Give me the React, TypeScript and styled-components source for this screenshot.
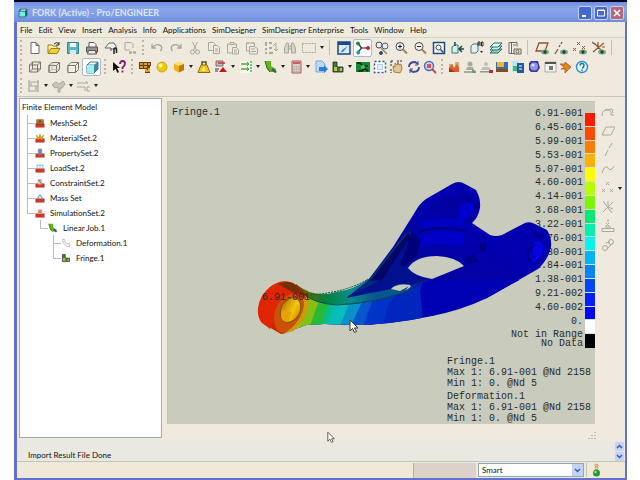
import React from 'react';
import styled, { createGlobalStyle, css } from 'styled-components';

const GlobalStyle = createGlobalStyle`
  * { box-sizing: border-box; }
  html, body { margin: 0; background: #fff; }
  body, button, select { font-family: Lato, "Liberation Sans", sans-serif; font-size: 8px; color: #111; }
`;

/* ---------- icons, all drawn on a 14 x 14 grid ---------- */
const g = '#aaa79d';
const d = '#6a6963';
const lens = (c: string, inner?: React.ReactNode) => (
  <g fill="none" stroke={c}>
    <circle cx="6" cy="5.5" r="4" fill="#eef4f4" />
    <path d="M9 8.500l4 4" stroke="#a08a48" strokeWidth="2" />
    {inner}
  </g>
);
const cube = (fill: string, stroke: string, front = fill) => (
  <g stroke={stroke} fill={fill}>
    <path d="M2 5.500L5 2.500H12.500V9.500L9.500 12.500H2z" />
    <path d="M2 5.500H9.500V12.500H2z" fill={front} />
    <path d="M9.500 5.500l3-3" />
  </g>
);
const base = <path d="M1 8h12v5H1z" fill="#d3392a" stroke="#a3281c" strokeWidth=".6" />;
const eye = (
  <g>
    <ellipse cx="10" cy="11" rx="4" ry="2.500" fill="#7fa98c" />
    <circle cx="10" cy="11" r="1.700" fill="#164a34" />
  </g>
);

const icons: Record<string, React.ReactNode> = {
  app: <g><path d="M1 4l3-3h9v9l-3 3H1z" fill="#155e63" /><path d="M2 5h8v7H2z" fill="#6ff0d8" /><path d="M3 4l2-2h7l-2 2z" fill="#c6fff2" /></g>,
  newFile: <path d="M3 1.500h5l3 3v8H3zM8 1.500v3h3" fill="#fff" stroke={d} />,
  open: <g><path d="M1 12V4h4l1 1h4v3" fill="#fff2a0" stroke="#9c7f1a" /><path d="M1 12.500l3-5h9l-3 5z" fill="#f5cf3c" stroke="#9c7f1a" /><path d="M7 3q3-3 5 0m0-2v3H9" fill="none" stroke="#333" /></g>,
  save: <g><path d="M1.500 1.500h11v11h-11z" fill="#58b6c4" stroke="#33828f" /><path d="M4 2h6v4H4z" fill="#f4fbfb" /><path d="M4 9h6v4H4z" fill="#d8ecf0" /></g>,
  print: <g stroke="#555" fill="#ddd"><path d="M4 6V1.500h5l2 2V6" fill="#fff" /><path d="M1.500 6h11v5h-11z" fill="#96938c" /><path d="M3.500 9.500h7l1 3.500h-9z" fill="#eee" /><circle cx="11" cy="11" r="1" fill="#c22" stroke="none" /></g>,
  mail: <g fill="none" stroke={d}><path d="M1 7l4-5h5l2 3v3H6" fill="#eee" /><path d="M1 7h6v3" /><path d="M10 13V8q1.500-2 2.500 0v4" stroke="#222" strokeWidth="1.500" /></g>,
  link: <g fill="none" stroke={g}><path d="M2 9V1.500h6l2 2V7M2 9h5" /><path d="M6 11.500h3m1 0h3" strokeWidth="2.500" /></g>,
  undo: <path d="M2 3v4h4M2.500 6.500q3-4 7-2.500t1 6" fill="none" stroke={g} strokeWidth="1.400" />,
  redo: <path d="M12 3v4H8M11.500 6.500q-3-4-7-2.500t-1 6" fill="none" stroke={g} strokeWidth="1.400" />,
  cut: <g fill="none" stroke={g}><path d="M4.500 1l4 8M9.500 1l-4 8" /><circle cx="4.500" cy="11" r="2" /><circle cx="9.500" cy="11" r="2" /></g>,
  copy: <g fill="#efeae0" stroke={g}><path d="M1.500 1.500h5l2 2v6h-7z" /><path d="M6.500 4.500h4l2 2v6h-6zM8 8h3M8 10h3" /></g>,
  paste: <g fill="#efeae0" stroke={g}><path d="M1.500 3h9v9h-9z" /><path d="M4 1.500h4v2H4z" /><path d="M6.500 6.500h4l2 2v4.500h-6zM8 9h3M8 11h3" /></g>,
  special: <g fill="#efeae0" stroke={g}><path d="M1.500 2h8v8h-8z" /><path d="M4.500 5.500h5l3 2V13h-8zM6 8h4M6 10.500h5M3 1v2M8 1v2" /></g>,
  regen: <g fill="none" stroke={g}><path d="M2 1v4M2 7v2M2 11v2M5 2h3M5 7h3M5 12h4" strokeWidth="2" /><path d="M9 5l3-3v8m-2-2l2 2 2-2" /></g>,
  find: <g fill="#d7d2c7" stroke={g}><path d="M1.500 12V7l2-5h2v10zM12.500 12V7l-2-5h-2v10zM5.500 5h3v3h-3z" /></g>,
  marquee: <path d="M.5 2.500h13v9H.5z" fill="none" stroke={g} strokeDasharray="2 1" />,
  repaint: <g><path d="M1 1h12v12H1z" fill="#d7ebf6" stroke="#1c4886" strokeWidth="1.500" /><path d="M1 1h12v3H1z" fill="#1c4886" /><path d="M11 5l-5 6H4l1-2z" fill="#477eb4" /></g>,
  spin: <g fill="none" strokeWidth="1.400"><path d="M5.500 7H12" stroke="#555" /><path d="M2 2l3.500 5-3.500 4.500" stroke="#345" /><circle cx="12" cy="7" r="1.500" fill="#c22" stroke="#c22" strokeWidth="1" /><circle cx="2" cy="2.500" r="1.500" fill="#282" stroke="#282" strokeWidth="1" /><circle cx="2.200" cy="11.500" r="1.500" fill="#299" stroke="#299" strokeWidth="1" /></g>,
  orient: <g fill="none" stroke="#464a58"><circle cx="4" cy="4" r="3" /><circle cx="10" cy="5" r="3" stroke="#3963a3" /><path d="M6 7l6 6" stroke="#a08a48" strokeWidth="1.500" /><circle cx="6" cy="12" r="1.500" fill="#2446a0" /></g>,
  zoomIn: lens('#454b50', <path d="M4 5.500h4M6 3.500v4" stroke="#222" />),
  zoomOut: lens('#454b50', <path d="M4 5.500h4" stroke="#222" />),
  refit: <g><path d="M1.500 1.500h11v11h-11z" fill="#f5f9fb" stroke="#27487b" strokeWidth="1.500" /><circle cx="6.500" cy="6.500" r="2.500" fill="none" stroke="#345" /><path d="M8.500 8.500l3 3" stroke="#345" strokeWidth="1.500" /></g>,
  reorient: <g><path d="M1 6l3-2h3v8H1z" fill="#d3f1ee" stroke="#357a73" /><path d="M4 1v4M13 8H8m3-3L8 8l3 3" stroke="#174e49" fill="none" strokeWidth="1.500" /></g>,
  saved: <g><path d="M1 5l2-2h5v7l-2 2H1z" fill="#dff3f0" stroke="#5b7672" /><path d="M8 5V1h2v4M8 3h2M11.500 1v4h1.500V1z" stroke="#333" fill="none" /><path d="M10 10h3l-1.500 2z" fill="#222" /></g>,
  layers: <g stroke="#276c67"><path d="M1 12l4-4h8l-4 4z" fill="#8fd0c9" /><path d="M1 9l4-4h8l-4 4z" fill="#c9ece8" /><path d="M1 6l4-4h8L9 6z" fill="#e8faf8" /></g>,
  viewMgr: <g fill="none" stroke={d}><path d="M1 1.500h8v4M1 1.500v11h5M3.500 2v10M5 4h3" fill="#f6f6f1" /><path d="M6 8h7v5H6z" fill="#e3e0d4" /><circle cx="9.500" cy="10.500" r="1.500" /></g>,
  plane: <g><path d="M1 10l3-8h9L10 10z" fill="none" stroke="#8e5630" strokeWidth="1.300" />{eye}</g>,
  axis: <g><path d="M1 13L4 8M5 6l1-2M7 3l1-2" stroke="#8e5630" strokeWidth="1.300" />{eye}</g>,
  points: <g><path d="M4 1l3 3m0-3L4 4M0 7l3 3m0-3l-3 3M9 5l3 3m0-3L9 8" stroke="#8e5630" />{eye}</g>,
  csys: <g><path d="M2 2l9 9M12 2L1 11M6 6V1M0 1l2 2M10 6h3" stroke="#8e5630" strokeWidth="1.200" />{eye}</g>,
  wire: <g fill="none" stroke={d} strokeWidth=".9"><path d="M1.500 5l3-3h8v7l-3 3h-8zM1.500 5h8v7M9.500 5l3-3M4.500 2v7h8M4.500 9l-3 3" /></g>,
  hidden: <g><g>{cube('none', '#77756f')}</g><path d="M5 2.500v7h7M5 9.500l-3 3" stroke="#b9b6ad" fill="none" /></g>,
  noHidden: cube('#f3f0e8', '#77756f'),
  shaded: <g><path d="M2 5l3-3h8v7l-4 4H2z" fill="#3a8c99" stroke="#4d7177" /><path d="M2 5h7v8H2z" fill="#9ef0ef" /><path d="M3 4.500L5.500 2.500H12l-2.500 2z" fill="#fff" /></g>,
  context: <g><path d="M1 2v9l2.500-2 2 4 1.500-1-2-4H8z" fill="#111" /><path d="M8 4q0-3 2.500-3T13 3.500t-2.500 4V9m0 1.500v2" stroke="#7a2070" strokeWidth="1.800" fill="none" /></g>,
  mesh: <g><path d="M1 2h12v4h-1v7H7V9H1z" fill="#6d3a12" /><path d="M2 4h3m1 0h3m1 0h2M2 7h3m1 0h3M8 9v2h3V8" stroke="#f2c22c" strokeWidth="1.600" fill="none" /></g>,
  ball: <g><circle cx="7" cy="7" r="5" fill="#f0ca05" stroke="#a98a00" strokeWidth=".6" /><circle cx="5.500" cy="5.500" r="2" fill="#fff9a4" /></g>,
  goldCube: <g><path d="M2 4l5-2 5 2v6l-5 2.500L2 10z" fill="#eeb014" /><path d="M2 4l5 2 5-2-5-2z" fill="#ffe269" /><path d="M7 6v6.500L12 10V4z" fill="#b97809" /></g>,
  weight: <g><path d="M4 5L1 12.500h12L10 5z" fill="#f4c70e" stroke="#8a6f12" /><path d="M5 5V2h4v3" fill="none" stroke="#665417" strokeWidth="1.500" /><path d="M7 6l-2 5h3z" fill="#fff8b8" /></g>,
  constraint: <g><path d="M1 1h12v12H1z" fill="#f6ece8" /><path d="M2 1h7v5H2z" fill="#d9b8b4" stroke="#555" strokeWidth=".8" /><path d="M1 9h4M1 11h3" stroke="#333" /><path d="M9 7l4 5H5z" fill="#c51a1a" /><path d="M4 3h7" stroke="#c33" strokeWidth="1.500" /></g>,
  flow: <g><path d="M1 1h12v12H1z" fill="#f4fae8" /><path d="M2 4h8M2 9h8" stroke="#58a22c" strokeWidth="1.400" /><path d="M8 2l2 2-2 2M8 7l2 2-2 2" fill="none" stroke="#58a22c" /><path d="M12 1v12" stroke="#28a5a0" strokeWidth="1.400" strokeDasharray="2 1" /></g>,
  job: <g><path d="M1 1h6v5l5 3v3H6L3 9z" fill="#63b51d" /><path d="M1 1l2 7 3 4" stroke="#376e0c" fill="none" /><path d="M9 8l4 4-2 1-4-3z" fill="#365d78" /></g>,
  calc: <g><path d="M3 1h9v12H3z" fill="#d6d0c7" stroke="#b3565b" /><path d="M4 3h7" stroke="#c33" strokeWidth="1.500" /><path d="M5 6v6M7.500 6v6M10 6v6" stroke="#aaa" strokeDasharray="1.500 1" strokeWidth="1.500" /></g>,
  exportIcon: <g><path d="M2 1h6l3 3v8H2z" fill="#b8dcf5" stroke="#7aa8d4" /><path d="M5 7h5V5l4 4-4 4v-2H5z" fill="#2e7bd0" /></g>,
  fringe: <g><path d="M2 2h4v5h6v5H2z" fill="#437a32" stroke="#222" strokeWidth=".8" /><path d="M3 7h3v4H3z" fill="#a3c84a" /><path d="M9 8h2v3H9z" fill="#bfae91" /></g>,
  chip: <g><path d="M0 2h14v10H0z" fill="#17843a" /><path d="M1 3h3l3 3h5M2 11h4l2-3 4 3" stroke="#04240c" strokeWidth="1.600" fill="none" /><circle cx="7" cy="7" r="2" fill="#37cf5e" /></g>,
  fence: <g><path d="M1.500 1.500h11v11h-11z" fill="#fff" stroke="#1f529e" strokeWidth="1.400" strokeDasharray="2 2" /><path d="M4.500 4.500h5v5h-5z" fill="#e6f0fa" stroke="#b4cdea" /></g>,
  hand: <g><path d="M1 1v6M1 9v4M1 1h3M7 1h5" stroke="#333" strokeDasharray="2 1" /><path d="M4 12L3 6l2 1V3l2 2 1-3 1 3 2-1 1 5-2 4z" fill="#e3c793" stroke="#8c6b35" strokeWidth=".8" /></g>,
  rotate: <g fill="none" stroke="#424b8e" strokeWidth="1.800"><path d="M2 7q0-5 6-5l3 2M12 7q0 5-6 5l-3-2" /><path d="M11 1v4H8M3 13V9h3" strokeWidth="1" /></g>,
  zoomBox: <g><circle cx="6" cy="6" r="4.500" fill="#cbd8f7" stroke="#5966bd" strokeWidth="1.500" /><path d="M4 4h4v4H4z" fill="#d35454" /><path d="M9 9l4 4" stroke="#ab5353" strokeWidth="2" /></g>,
  blocks: <g><path d="M2 4h4v3H2zM8 2h4v4H8z" fill="#d8ae78" /><path d="M2 8h10v4H2z" fill="#8e3c20" /><path d="M2 8l3-4 2 4 3-4 2 3v5H8z" fill="#e35b2a" /></g>,
  person: <g fill="#aaa9a5"><circle cx="7" cy="4" r="2.500" /><path d="M4 7h6l1 3H3zM1 11h12v2H1z" /><path d="M9 9l4 2v2H9z" fill="#6ba26c" /></g>,
  personRed: <g fill="#c0beb8"><circle cx="7" cy="4" r="2" /><path d="M4 7h6l2 3H2z" /><path d="M1 11h12v1.500H1z" fill="#999" /><path d="M10 10h4v3h-4z" fill="#bb2f3c" /></g>,
  photo: <g><path d="M1 2h12v10H1z" fill="#3c67b1" /><path d="M2 2h7v5H2z" fill="#f0b52a" /><path d="M1 9h12v3H1z" fill="#81501b" /></g>,
  tile: <g><path d="M1 1h7v11H1z" fill="#bde3f8" /><path d="M6 3h7v10H6z" fill="#1f5a9b" /><path d="M2 6h4v5H2z" fill="#4eb55c" /><path d="M8 6h3M8 9h3" stroke="#fff" /></g>,
  globe: <g><path d="M2 3l2-2h7l2 7-3 4H4l-2-2z" fill="#3a3a96" /><circle cx="7" cy="6.500" r="4" fill="#8d93e6" /><circle cx="6" cy="5" r="1.500" fill="#e4e7ff" /></g>,
  sheet: <g><path d="M2 2h11v10H2z" fill="#f3f3ef" stroke="#aaa" /><path d="M2 2h11v2H2z" fill="#555" /><path d="M6 6h4v4H6z" fill="#777" /></g>,
  arrowRight: <path d="M1 4h5V2l6 5-6 6V9H2q4-1 3-2z" fill="#e68418" stroke="#a84b12" strokeWidth=".7" />,
  help: <g><circle cx="7" cy="7" r="5.500" fill="#e4f4fc" stroke="#2c8fc4" strokeWidth="1.400" /><path d="M5 5.500Q5 3.500 7 3.500t2 2-2 2.500m0 1.500v1.500" stroke="#1876ac" strokeWidth="1.400" fill="none" /></g>,
  film: <g fill="none" stroke={g}><path d="M2 1v12M11 1v12M2 3h9M2 7h9M2 12h9M4 7V4M9 7v4" strokeWidth="1.200" /></g>,
  bolt: <g fill="#c9c5bc" stroke={g}><path d="M0 6l4-3 3 2 4-3 2 3-3 4H8v4H6V8L3 9z" /></g>,
  wireRow: <g fill="none" stroke={g}><path d="M0 4h11l-2-2M3 8h5v4M13 8h-3v4h3M0 8h3" /></g>,
  meshSet: <g>{base}<path d="M2 2h10v7H2z" fill="#6e3813" /><path d="M3 4h3m2 0h3M3 7h8" stroke="#d5a033" strokeWidth="1.500" /></g>,
  materialSet: <g>{base}<path d="M2 3l3 5 2-5 2 5 3-5" fill="none" stroke="#c7a319" strokeWidth="2" /></g>,
  propertySet: <g>{base}<path d="M4 1h6v8H4z" fill="#8da3ca" /><path d="M6 1v8M8 1v8" stroke="#5d6f9b" /></g>,
  loadSet: <g>{base}<path d="M2 3h10M3 3v4M7 3v4M11 3v4" stroke="#82c8cb" strokeWidth="1.400" /></g>,
  constraintSet: <g>{base}<path d="M4 2h6v7H4z" fill="#d4c6c0" /><path d="M4 3h4M6 4l3 4" stroke="#784b4b" /></g>,
  massSet: <g>{base}<path d="M7 1l5 7H2z" fill="#7aa9d6" /><circle cx="7" cy="6" r="1.500" fill="#e9f4ff" /></g>,
  simSet: <g>{base}<path d="M4 2h6v6H4z" fill="#e9a796" /><path d="M5 4h4M5 6h4" stroke="#b7604e" /></g>,
  deform: <path d="M2 2h3q0 5 3 6h4v4Q3 12 2 2z" fill="#fafafa" stroke="#aaa" />,
  curve1: <g fill="none" stroke={g}><path d="M1 11q0-6 5-6t4 5h3M4 5l7-1M11 4l1 4" /></g>,
  sidePlane: <path d="M1 11l4-8h9l-4 8z" fill="none" stroke={g} />,
  sideAxis: <path d="M4 13L7 7M8 5l3-5" fill="none" stroke={g} />,
  sideCurve: <path d="M1 11q3-9 6-5t6-2" fill="none" stroke={g} />,
  sidePoints: <path d="M5 1l3 3m0-3L5 4M1 8l3 3m0-3l-3 3M9 8l3 3m0-3l-3 3" stroke={g} />,
  sideCsys: <path d="M2 1l9 12M12 2L2 12M7 6V1M7 7l5 2" fill="none" stroke={g} />,
  sideStamp: <g fill="none" stroke={g}><path d="M5 4l3 3m0-3L5 7M7 0v3M1 9.500h12v3H1zM4 8h6" /></g>,
  sideChain: <g fill="none" stroke={g}><circle cx="4" cy="10" r="2.500" /><circle cx="10" cy="4" r="2.500" /><path d="M5 5l4-1M6 11l5-5" /></g>,
};

const Svg = styled.svg`
  display: block;
  flex: none;
`;
const Icon = ({ name, size = 14 }: { name: string; size?: number }) => (
  <Svg width={size} height={size} viewBox="0 0 14 14" aria-hidden="true">{icons[name]}</Svg>
);

/* ---------- window frame ---------- */
const Page = styled.div`
  min-height: 100vh;
  padding: 0 13px 0 14px;
  display: flex;
`;
const Frame = styled.div`
  position: relative;
  flex: 1;
  min-width: 0;
  display: flex;
  flex-direction: column;
  background: #efe9de;
  border: solid #6672ca;
  border-width: 0 2px 2px 3px;
`;
const TitleBar = styled.header`
  height: 22px;
  display: flex;
  align-items: center;
  gap: 2px;
  margin: 0 -2px 0 -3px;
  padding: 2px 3px 0 4px;
  border-top: 2px solid #05051c;
  background: linear-gradient(#6f8bdd, #8aa6ea 30%, #7d9ae3 75%, #7089d4);
`;
const Title = styled.h1`
  flex: 1;
  margin: 0 0 0 2px;
  font: bold 9px/14px Lato, "Liberation Sans", sans-serif;
  color: #dbe6fa;
`;
const Caption = styled.button<{ $red?: boolean }>`
  width: 14px;
  height: 14px;
  padding: 0;
  display: grid;
  place-items: center;
  border: 1px solid #c3d1f3;
  border-radius: 2px;
  background: ${p => (p.$red ? '#b5687c' : '#4468cf')};
`;
const MenuBar = styled.nav`
  height: 15px;
  display: flex;
  align-items: center;
  gap: 6px;
  padding-left: 3px;
  background: #efebdf;
`;
const MenuItem = styled.button`
  padding: 0;
  border: 0;
  background: none;
  line-height: 12px;
  white-space: nowrap;
`;
const Toolbars = styled.div`
  border-top: 1px solid #d8d3c5;
  border-bottom: 1px solid #c9c5b9;
  padding-bottom: 1px;
`;
const ToolRow = styled.div`
  height: 19px;
  display: flex;
  align-items: center;
`;
const Tool = styled.button<{ $w: number; $on?: boolean }>`
  width: ${p => p.$w}px;
  height: 18px;
  flex: none;
  padding: 0;
  display: flex;
  align-items: center;
  justify-content: center;
  border: 0;
  background: none;
  ${p => p.$on && css`background: #fff; outline: 1px solid #a9b8c6; outline-offset: -1px; border-radius: 2px;`}
`;
const Drop = styled.button`
  width: 8px;
  height: 16px;
  flex: none;
  padding: 0;
  border: 0;
  background: none;
  display: grid;
  place-items: center;
  &::before {
    content: '';
    border: solid transparent;
    border-width: 3px 2px 0;
    border-top-color: #222;
  }
`;
const Sep = styled.span<{ $solid?: boolean }>`
  width: 3px;
  height: 15px;
  flex: none;
  margin: 0 2px 0 3px;
  border-left: ${p => (p.$solid ? '1px solid #c3beb0' : '2px dotted #b9b5a8')};
`;

/* '>' is a drop-down arrow, '|' a dotted grip, '/' a solid divider, '*' marks a pressed tool */
const Tools = ({ items, width }: { items: string; width: number }) => (
  <>
    {items.split(' ').map((it, i) => {
      if (it === '>') return <Drop key={i} aria-label="More options" />;
      if (it === '|') return <Sep key={i} />;
      if (it === '/') return <Sep key={i} $solid />;
      const on = it[0] === '*';
      const name = on ? it.slice(1) : it;
      return <Tool key={i} $w={width} $on={on} aria-label={name}><Icon name={name} /></Tool>;
    })}
  </>
);

/* ---------- model tree ---------- */
const Main = styled.main`
  flex: 1;
  display: flex;
  padding-left: 2px;
`;
const TreePanel = styled.section`
  width: 143px;
  flex: none;
  margin: 1px 0 3px;
  padding: 1px 2px 0;
  background: #fff;
  border: 1px solid #9fadb0;
`;
const TreeTitle = styled.h2`
  margin: 0;
  font-size: 8px;
  font-weight: normal;
  line-height: 15px;
`;
const TreeList = styled.ul`
  list-style: none;
  margin: 0;
  padding: 0;
`;
const TreeRow = styled.li<{ $level: number }>`
  height: 15px;
  display: flex;
  align-items: center;
  gap: 5px;
  padding-left: ${p => 5 + p.$level * 13}px;
  white-space: nowrap;
`;
const Branch = styled.span<{ $last?: boolean }>`
  width: 8px;
  height: 15px;
  margin-right: -5px;
  flex: none;
  &::before, &::after {
    content: '';
    display: block;
    height: 8px;
    border-left: 1px solid #bbb;
  }
  &::before { border-bottom: 1px solid #bbb; }
  &::after { height: 7px; ${p => p.$last && css`border-color: transparent;`} }
`;
const nodes: [string, string, number, boolean][] = [
  ['MeshSet.2', 'meshSet', 0, false],
  ['MaterialSet.2', 'materialSet', 0, false],
  ['PropertySet.2', 'propertySet', 0, false],
  ['LoadSet.2', 'loadSet', 0, false],
  ['ConstraintSet.2', 'constraintSet', 0, false],
  ['Mass Set', 'massSet', 0, false],
  ['SimulationSet.2', 'simSet', 0, true],
  ['Linear Job.1', 'job', 1, true],
  ['Deformation.1', 'deform', 2, false],
  ['Fringe.1', 'fringe', 2, true],
];

/* ---------- graphics view ---------- */
const View = styled.section`
  position: relative;
  flex: 1;
  min-width: 0;
  margin: 4px 0 17px 5px;
  background: #c9ccbd;
  border: 1px solid #c2c3b5;
  border-width: 1px 0 0 1px;
  display: flex;
  flex-direction: column;
  font: 10px/11px "Liberation Mono", monospace;
  color: #2a2a28;
  overflow: hidden;
`;
const ViewTop = styled.div`
  display: flex;
  justify-content: space-between;
  padding: 5px 0 0 4px;
`;
const Legend = styled.div`
  display: flex;
  gap: 2px;
`;
const Labels = styled.div`
  text-align: right;
`;
const Scale = styled.ol`
  height: 221px;
  list-style: none;
  margin: 0;
  padding: 0;
  display: grid;
  grid-auto-rows: 1fr;
  align-items: center;
`;
const Extra = styled.div`
  line-height: 9px;
  padding-top: 2px;
`;
const Swatches = styled.div`
  width: 10px;
  height: 235px;
  margin-top: 6px;
  display: flex;
  flex-direction: column;
`;
const Swatch = styled.span<{ $c: string }>`
  flex: 1;
  background: ${p => p.$c};
  border-bottom: 1px solid ${p => (p.$c === '#000' ? '#000' : '#d9e0d4')};
`;
const Results = styled.div`
  align-self: flex-end;
  width: 148px;
  margin-top: 8px;
  display: grid;
  gap: 2px;
  white-space: pre;
`;
const Model = styled.svg`
  position: absolute;
  left: -1px;
  top: -1px;
`;
const MaxTag = styled.span`
  position: absolute;
  left: 94px;
  top: 190px;
`;
const Pointer = styled.svg<{ $x: number; $y: number }>`
  position: absolute;
  left: ${p => p.$x}px;
  top: ${p => p.$y}px;
`;
const labels = ['6.91-001', '6.45-001', '5.99-001', '5.53-001', '5.07-001', '4.60-001', '4.14-001', '3.68-001', '3.22-001', '2.76-001', '2.30-001', '1.84-001', '1.38-001', '9.21-002', '4.60-002', '0.'];
const colors = ['#fa1c04', '#fb4a05', '#fa7c04', '#fbb204', '#fdfb05', '#b8fb04', '#7cf508', '#06e878', '#06efae', '#06f3ee', '#04b4f5', '#0484f5', '#0446fa', '#0420fa', '#0404f5', '#fff', '#000'];

const Side = styled.aside`
  width: 30px;
  flex: none;
  padding: 6px 0 0 5px;
  display: flex;
  flex-direction: column;
  gap: 1px;
`;
const SideRow = styled.div`
  height: 18px;
  display: flex;
  align-items: center;
`;

/* ---------- bottom bars ---------- */
const Message = styled.div`
  height: 21px;
  display: flex;
  align-items: center;
  justify-content: space-between;
  padding: 0 0 0 11px;
  background: #e9e9e2;
  border-bottom: 1px solid #c6c4b8;
`;
const MessageText = styled.span`
  padding-top: 8px;
`;
const Scroller = styled.div`
  display: grid;
  gap: 1px;
  margin-right: 1px;
`;
const ScrollButton = styled.button`
  width: 9px;
  height: 9px;
  padding: 0;
  border: 0;
  border-radius: 1px;
  background: #c3d3f8;
  display: grid;
  place-items: center;
`;
const GripRow = styled.div`
  position: absolute;
  right: 28px;
  bottom: 38px;
`;
const Status = styled.footer`
  height: 16px;
  display: flex;
  align-items: center;
  background: #eee9d9;
`;
const StatusSpace = styled.div`
  flex: 1;
`;
const StatusCell = styled.div`
  width: 63px;
  height: 15px;
  margin-right: 2px;
  background: #dcd2ca;
  border-left: 1px solid #b9b1a8;
`;
const FilterBox = styled.label`
  width: 106px;
  display: grid;
  align-items: center;
`;
const Filter = styled.select`
  grid-area: 1 / 1;
  width: 100%;
  height: 14px;
  padding: 0 3px;
  appearance: none;
  border: 1px solid #8fa5bf;
  border-radius: 0;
  background: #fff;
`;
const FilterArrow = styled.span`
  grid-area: 1 / 1;
  justify-self: end;
  width: 11px;
  height: 12px;
  margin-right: 1px;
  display: grid;
  place-items: center;
  background: #c3d3f8;
  pointer-events: none;
`;
const Light = styled.div`
  width: 39px;
  padding-left: 5px;
  margin-left: 2px;
  border-left: 1px solid #c6c2b4;
`;
const Chevron = ({ up = false }: { up?: boolean }) => (
  <Svg width="7" height="5" viewBox="0 0 7 5"><path d={up ? 'M1 4l2.500-2.500L6 4' : 'M1 1l2.500 2.500L6 1'} fill="none" stroke="#3f5b9c" strokeWidth="1.500" /></Svg>
);
const arrowPath = 'M1 1v11l2.500-2.500 2 4 2-1-2-3.500H9z';

const Fork = () => (
  <Model width="428" height="322" viewBox="167 101 428 322" role="img" aria-label="Fork fringe plot">
    <defs>
      <clipPath id="front"><path d="M298 291Q318 307 345 304Q392 300 415 287L432 279L464 266L552 222V262L535 272L510 285L487 298Q462 310 432 316Q390 325 352 325Q320 323 306 325L282 334Q296 318 298 291z" /></clipPath>
      <linearGradient id="arm" x1="425" y1="200" x2="365" y2="290" gradientUnits="userSpaceOnUse">
        <stop offset="0" stopColor="#0000ae" /><stop offset=".55" stopColor="#0306a0" /><stop offset=".8" stopColor="#073c92" /><stop offset="1" stopColor="#087c83" />
      </linearGradient>
      <linearGradient id="neck" x1="292" y1="0" x2="375" y2="0" gradientUnits="userSpaceOnUse">
        <stop offset="0" stopColor="#8a4a06" /><stop offset=".2" stopColor="#556b08" /><stop offset=".4" stopColor="#087f3d" /><stop offset=".7" stopColor="#088f86" /><stop offset="1" stopColor="#06558f" />
      </linearGradient>
      <linearGradient id="bore" x1="283" y1="0" x2="302" y2="0" gradientUnits="userSpaceOnUse">
        <stop offset="0" stopColor="#c88a06" /><stop offset=".5" stopColor="#f3c60c" /><stop offset="1" stopColor="#d78804" />
      </linearGradient>
    </defs>
    <path fillRule="evenodd" fill="url(#arm)" d="M366 283L393 247L415 212Q419 204 426 199L452 184Q459 180 465 184L476 190Q481 199 480 208Q478 218 472 223L490 235Q496 237 502 235L525 223Q530 221 535 224L547 230Q552 238 551 247Q548 260 538 269L510 285L487 298L432 316L345 318V292zM408 268Q416 256 437 256Q456 257 464 266L432 279Q414 276 408 268zM392 288Q396 283 411 286Q408 291 400 291z" />
    <path d="M296 284Q314 299 336 292Q354 290 368 279L412 281L400 299L345 306Q310 307 296 294z" fill="url(#neck)" />
    <path d="M368 281L405 232L412 225L405 267Q411 275 428 279L411 285Q396 282 391 289L346 298z" fill="#00108f" />
    <path d="M365 284L405 234L411 232L378 281L355 294z" fill="#062b77" />
    <path d="M370 281L408 233L411 236L382 280z" fill="#020765" />
    <path d="M391 289Q396 283 411 285L400 291z" fill="#c9ccbd" />
    <g clipPath="url(#front)">
      <path d="M260 280h300v60H260z" fill="#0000b4" />
      <path d="M413 270h15l-8 20 4 40h-60z" fill="#0026bd" />
      <path d="M280 280h130l-22 24-6 24H280z" fill="#0034c8" />
      <path d="M280 280h103l-11 22-9 26h-83z" fill="#064ed0" />
      <path d="M280 280h100l-9 22-9 26h-82z" fill="#0756cc" />
      <path d="M280 280h92l-11 24-11 24h-70z" fill="#0a91c8" />
      <path d="M280 280h80l-11 24-10 24h-59z" fill="#09bcbc" />
      <path d="M280 280h67l-12 24-9 24h-46z" fill="#09bd89" />
      <path d="M280 280h56l-8 24-8 24h-40z" fill="#2ab936" />
      <path d="M280 280h46l-8 24-9 24h-29z" fill="#85bf14" />
      <path d="M280 280h35l-6 24-12 28h-17z" fill="#bcb50b" />
      <path d="M280 280h25l-1 20-10 32h-14z" fill="#c18c09" />
    </g>
    <path d="M300 292Q315 304 337 305Q380 303 412 289" fill="none" stroke="#094c48" strokeWidth="1" />
    <path d="M310 295Q348 292 368 279" fill="none" stroke="#06534c" strokeDasharray="2 1" />
    <path d="M258 308Q260 295 270 287Q282 279 292 283Q303 287 306 298L300 321Q291 333 281 334L262 323Q257 317 258 308z" fill="#d42204" />
    <path d="M270 287Q282 278 293 283L305 296Q294 292 283 300Q275 306 273 322L270 329L261 322Q256 307 262 296z" fill="#e02505" />
    <path d="M278 284Q290 279 297 286L309 297Q300 294 292 292z" fill="#743009" />
    <path d="M274 318Q275 300 291 294Q305 294 304 308Q301 325 286 332Q275 335 274 318z" fill="#cc5108" />
    <path d="M302 298Q307 305 299 319Q292 330 282 334L293 331Q308 319 309 300z" fill="#c99a09" />
    <ellipse cx="290.500" cy="310" rx="9.500" ry="13" transform="rotate(28 290.500 310)" fill="url(#bore)" stroke="#7d5609" />
    <path d="M282 310l10 2-4 10q-6 0-7-5z" fill="#e5a208" />
    <path d="M428 209Q442 198 464 192L478 205Q477 218 470 223L453 220z" fill="#0000a2" />
    <path d="M422 221Q440 217 464 220L462 227Q438 225 421 229z" fill="#0000c4" />
    <path d="M420 236Q440 228 464 233V247Q436 240 418 249z" fill="#0000c8" />
    <path d="M419 232Q440 225 466 231" fill="none" stroke="#000080" strokeWidth="2" />
    <path d="M412 232l9 8-4 16-12 11-5-2z" fill="#00007a" />
    <path d="M466 258l8-4 4 8-10 2zM480 244l6-3v10l-6 2z" fill="#000084" />
    <path d="M459 209q7-10 11-9 6 7 0 16l-8 5q-6-2-3-12z" fill="#0000ce" />
    <ellipse cx="468" cy="200" rx="2" ry="2.500" fill="#000070" />
    <path d="M529 250q4-9 10-9 7 3 3 13l-7 8q-8-1-6-12z" fill="#0404e0" />
    <path d="M537 234l4 5M530 261q-4-9 2-15" fill="none" stroke="#000080" strokeWidth="3" />
    <path d="M535 244q-6 8-1 15" fill="none" stroke="#000088" strokeWidth="1" />
  </Model>
);

export default function App() {
  return (
    <>
      <GlobalStyle />
      <Page>
        <Frame>
          <TitleBar>
            <Icon name="app" size={10} />
            <Title>FORK (Active) - Pro/ENGINEER</Title>
            <Caption aria-label="Minimize"><Svg width="10" height="10"><path d="M2 8h4" stroke="#fff" strokeWidth="2" /></Svg></Caption>
            <Caption aria-label="Maximize"><Svg width="10" height="10"><path d="M1.500 2h7v6h-7zM1 2.500h8" stroke="#fff" fill="none" /></Svg></Caption>
            <Caption $red aria-label="Close"><Svg width="10" height="10"><path d="M2 2l6 6m0-6L2 8" stroke="#fff" strokeWidth="1.500" /></Svg></Caption>
          </TitleBar>
          <MenuBar>
            {['File', 'Edit', 'View', 'Insert', 'Analysis', 'Info', 'Applications', 'SimDesigner', 'SimDesigner Enterprise', 'Tools', 'Window', 'Help'].map(m => <MenuItem key={m}>{m}</MenuItem>)}
          </MenuBar>
          <Toolbars>
            <ToolRow>
              <Tools width={19} items="| newFile open save print mail link | undo redo cut copy paste special regen find marquee > / repaint *spin orient zoomIn zoomOut refit reorient saved layers viewMgr / plane axis points csys /" />
            </ToolRow>
            <ToolRow>
              <Tools width={19} items="| wire hidden noHidden *shaded | context |" />
              <Tools width={17} items="mesh ball goldCube > weight constraint > flow > job > calc > exportIcon fringe > chip fence hand rotate" />
              <Tools width={16} items="zoomBox | blocks person personRed photo tile globe sheet arrowRight help" />
            </ToolRow>
            <ToolRow>
              <Tools width={17} items="| film > bolt > wireRow >" />
            </ToolRow>
          </Toolbars>
          <Main>
            <TreePanel>
              <TreeTitle>Finite Element Model</TreeTitle>
              <TreeList>
                {nodes.map(([text, icon, level, last]) => (
                  <TreeRow key={text} $level={level}><Branch $last={last} /><Icon name={icon} size={10} />{text}</TreeRow>
                ))}
              </TreeList>
            </TreePanel>
            <View>
              <ViewTop>
                <span>Fringe.1</span>
                <Legend>
                  <Labels>
                    <Scale>{labels.map(l => <li key={l}>{l}</li>)}</Scale>
                    <Extra>Not in Range<br />No Data</Extra>
                  </Labels>
                  <Swatches>{colors.map(c => <Swatch key={c} $c={c} />)}</Swatches>
                </Legend>
              </ViewTop>
              <Results>
                <div>{'Fringe.1\nMax 1: 6.91-001 @Nd 2158\nMin 1: 0. @Nd 5'}</div>
                <div>{'Deformation.1\nMax 1: 6.91-001 @Nd 2158\nMin 1: 0. @Nd 5'}</div>
              </Results>
              <Fork />
              <MaxTag>6.91-001</MaxTag>
              <Pointer $x={181} $y={217} width="11" height="15"><path d={arrowPath} fill="#fff" stroke="#333" /></Pointer>
            </View>
            <Side>
              {['curve1', 'sidePlane', 'sideAxis', 'sideCurve', 'sidePoints', 'sideCsys', 'sideStamp', 'sideChain'].map(n => (
                <SideRow key={n}><Tool $w={16} aria-label={n}><Icon name={n} /></Tool>{n === 'sidePoints' && <Drop aria-label="More points" />}</SideRow>
              ))}
            </Side>
          </Main>
          <GripRow>
            <Svg width="10" height="9"><path d="M8 1v1M8 4v1M8 7v1M5 4v1M5 7v1M2 7v1" stroke="#bdb8aa" strokeWidth="2" /></Svg>
          </GripRow>
          <Message>
            <MessageText>Import Result File Done</MessageText>
            <Scroller>
              <ScrollButton aria-label="Scroll up"><Chevron up /></ScrollButton>
              <ScrollButton aria-label="Scroll down"><Chevron /></ScrollButton>
            </Scroller>
          </Message>
          <Status>
            <StatusSpace />
            <StatusCell />
            <FilterBox>
              <Filter aria-label="Selection filter"><option>Smart</option></Filter>
              <FilterArrow><Chevron /></FilterArrow>
            </FilterBox>
            <Light>
              <Svg width="9" height="14"><circle cx="4.500" cy="2.500" r="1.500" fill="#efb9a0" stroke="#d2784e" strokeWidth=".7" /><circle cx="4.500" cy="5.500" r="1.500" fill="#eedb98" stroke="#bb9a38" strokeWidth=".7" /><circle cx="4.500" cy="10" r="3.500" fill="#24983a" /><circle cx="3.500" cy="9" r="1.200" fill="#9ce29a" /></Svg>
            </Light>
          </Status>
          <Pointer $x={310} $y={431} width="9" height="13" viewBox="0 0 11 15"><path d={arrowPath} fill="#fff" stroke="#444" /></Pointer>
        </Frame>
      </Page>
    </>
  );
}
